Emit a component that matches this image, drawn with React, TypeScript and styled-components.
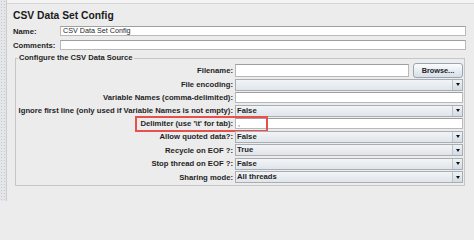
import React from "react";
import styled, { createGlobalStyle } from "styled-components";

const GlobalStyle = createGlobalStyle`
  html, body {
    margin: 0;
    padding: 0;
    background: #ececec;
  }
  body {
    font-family: "Liberation Sans", Arial, sans-serif;
    color: #1f1f1f;
  }
`;

const Window = styled.div`
  display: flex;
  width: 474px;
  height: 201px;
  overflow: hidden;
  background: #f4f4f4;
`;

const Splitter = styled.div`
  width: 6px;
  flex-shrink: 0;
  background-color: #e5e6e9;
  background-image: radial-gradient(#c4c6ca 0.6px, transparent 0.9px);
  background-size: 3px 3px;
  border-right: 1px solid #cccccc;
`;

const Panel = styled.div`
  flex: 1;
  margin-top: 3px;
  border-top: 1px solid #d5d5d5;
  background: #ececec;
  padding: 5px 8px 0 6px;
  box-sizing: border-box;
  display: flex;
  flex-direction: column;
`;

const Title = styled.h2`
  margin: 0;
  font-size: 10.3px;
  line-height: 14px;
  font-weight: bold;
  color: #1a1a1a;
`;

const TopRow = styled.div<{ $gap: number }>`
  display: flex;
  align-items: center;
  height: 10px;
  margin-top: ${(p) => p.$gap}px;
`;

const TopLabel = styled.div`
  width: 47px;
  flex-shrink: 0;
  font-size: 7.7px;
  font-weight: bold;
  white-space: nowrap;
`;

const TextField = styled.div<{ $height?: number }>`
  flex: 1;
  height: ${(p) => p.$height ?? 11}px;
  box-sizing: border-box;
  border: 1px solid #b9b9b9;
  border-top-color: #9f9f9f;
  background: #ffffff;
  font-size: 7.2px;
  line-height: ${(p) => (p.$height ?? 11) - 2}px;
  padding-left: 2px;
  white-space: nowrap;
  overflow: hidden;
`;

const Group = styled.fieldset`
  margin: 3px 1px 0 2px;
  padding: 0 1px 2px 1px;
  border: 1px solid #c6c6c6;
  display: flex;
  flex-direction: column;
  gap: 1.5px;
  min-width: 0;
`;

const Legend = styled.legend`
  font-size: 7.6px;
  line-height: 10px;
  font-weight: bold;
  padding: 0 1px;
  margin-left: 1px;
`;

const Row = styled.div<{ $height: number }>`
  position: relative;
  display: flex;
  align-items: center;
  height: ${(p) => p.$height}px;
`;

const RowLabel = styled.div`
  flex: 1;
  text-align: right;
  font-size: 7.7px;
  font-weight: bold;
  white-space: nowrap;
  padding-right: 2px;
`;

const Control = styled.div`
  width: 228px;
  flex-shrink: 0;
  display: flex;
  gap: 4px;
  align-items: center;
  height: 100%;
`;

const Combo = styled.div`
  flex: 1;
  height: 12px;
  box-sizing: border-box;
  display: flex;
  border: 1px solid #a9aeb4;
  background: linear-gradient(#f2f4f7, #e0e5ea);
`;

const ComboText = styled.div`
  flex: 1;
  font-size: 7.7px;
  font-weight: bold;
  line-height: 10px;
  padding-left: 1px;
`;

const ComboArrow = styled.div`
  width: 9px;
  border-left: 1px solid #bcc3cb;
  background: linear-gradient(#eef2f6, #d3dbe5);
  display: flex;
  align-items: center;
  justify-content: center;

  &::after {
    content: "";
    border-left: 2.5px solid transparent;
    border-right: 2.5px solid transparent;
    border-top: 3px solid #111;
  }
`;

const BrowseButton = styled.div`
  width: 50px;
  height: 15px;
  box-sizing: border-box;
  border: 1px solid #9aa5b2;
  border-radius: 3px;
  background: linear-gradient(#fbfcfe, #d6dee8);
  font-size: 7.3px;
  font-weight: bold;
  line-height: 13px;
  text-align: center;
  color: #222;
`;

const Highlight = styled.div`
  position: absolute;
  left: 118px;
  top: -2px;
  width: 133px;
  height: 16px;
  box-sizing: border-box;
  border: 2px solid #e8504c;
  pointer-events: none;
`;

type Field =
  | { label: string; kind: "file" }
  | { label: string; kind: "text"; value?: string; highlight?: boolean }
  | { label: string; kind: "combo"; value?: string };

const fields: Field[] = [
  { label: "Filename:", kind: "file" },
  { label: "File encoding:", kind: "combo" },
  { label: "Variable Names (comma-delimited):", kind: "text" },
  { label: "Ignore first line (only used if Variable Names is not empty):", kind: "combo", value: "False" },
  { label: "Delimiter (use '\\t' for tab):", kind: "text", value: ",", highlight: true },
  { label: "Allow quoted data?:", kind: "combo", value: "False" },
  { label: "Recycle on EOF ?:", kind: "combo", value: "True" },
  { label: "Stop thread on EOF ?:", kind: "combo", value: "False" },
  { label: "Sharing mode:", kind: "combo", value: "All threads" },
];

const rowHeight = (f: Field) => (f.kind === "file" ? 14 : f.kind === "text" ? 11 : 12);

const App: React.FC = () => {
  return (
    <>
      <GlobalStyle />
      <Window>
        <Splitter />
        <Panel>
          <Title>CSV Data Set Config</Title>
          <TopRow $gap={3}>
            <TopLabel>Name:</TopLabel>
            <TextField $height={10}>CSV Data Set Config</TextField>
          </TopRow>
          <TopRow $gap={4}>
            <TopLabel>Comments:</TopLabel>
            <TextField $height={10} />
          </TopRow>
          <Group>
            <Legend>Configure the CSV Data Source</Legend>
            {fields.map((f) => (
              <Row key={f.label} $height={rowHeight(f)}>
                <RowLabel>{f.label}</RowLabel>
                <Control>
                  {f.kind === "file" && (
                    <>
                      <TextField $height={13} />
                      <BrowseButton>Browse...</BrowseButton>
                    </>
                  )}
                  {f.kind === "text" && <TextField>{f.value}</TextField>}
                  {f.kind === "combo" && (
                    <Combo>
                      <ComboText>{f.value}</ComboText>
                      <ComboArrow />
                    </Combo>
                  )}
                </Control>
                {f.kind === "text" && f.highlight && <Highlight />}
              </Row>
            ))}
          </Group>
        </Panel>
      </Window>
    </>
  );
};

export default App;
